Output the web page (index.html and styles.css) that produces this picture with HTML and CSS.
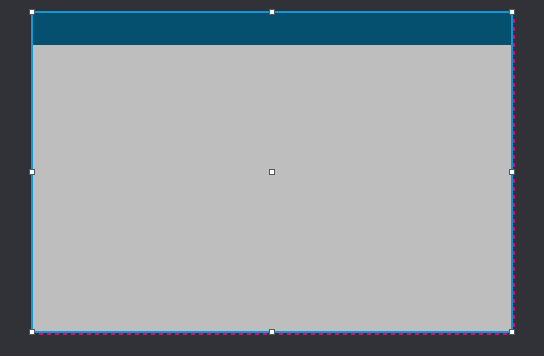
FILE: index.html
```html
<!DOCTYPE html>
<html lang="en">
<head>
  <meta charset="UTF-8" />
  <title>Canvas</title>
  <link rel="stylesheet" href="styles.css">
</head>
<body>
  <div class="canvas">
    <div class="frame">
      <div class="frame-header"></div>
      <div class="frame-body"></div>
      <div class="handles">
        <span class="handle tl"></span>
        <span class="handle tc"></span>
        <span class="handle tr"></span>
        <span class="handle ml"></span>
        <span class="handle mc"></span>
        <span class="handle mr"></span>
        <span class="handle bl"></span>
        <span class="handle bc"></span>
        <span class="handle br"></span>
      </div>
    </div>
  </div>
</body>
</html>
```

FILE: styles.css
```css
body {
  margin: 0;
  background: #303237;
  font-family: 'Liberation Sans', Arial, sans-serif;
}
.canvas {
  width: 544px;
  height: 356px;
  padding: 11px 0 0 31px;
  box-sizing: border-box;
}
.frame {
  position: relative;
  width: 482px;
  height: 322px;
  box-sizing: border-box;
  border: 2px solid #0f99d6;
  display: flex;
  flex-direction: column;
}
/* dashed shadow outline behind the selected frame */
.frame::before {
  content: "";
  position: absolute;
  left: 0;
  top: 0;
  width: 482px;
  height: 322px;
  z-index: -1;
  background:
    repeating-linear-gradient(to bottom, #e6007e 0 2px, transparent 2px 6px, #e6007e 6px 8px) right top / 2px 100% no-repeat,
    repeating-linear-gradient(to right, #e6007e 0 2px, transparent 2px 6px, #e6007e 6px 8px) left bottom / 100% 2px no-repeat;
}
.frame-header {
  height: 32px;
  background: #054f6f;
}
.frame-body {
  flex: 1;
  background: #bebebe;
}
.handles {
  position: absolute;
  top: -1px;
  left: -1px;
  right: -1px;
  bottom: -1px;
}
.handle {
  position: absolute;
  width: 6px;
  height: 6px;
  box-sizing: border-box;
  background: #fff;
  border: 1px solid #55585e;
  transform: translate(-50%, -50%);
}
.tl, .ml, .bl { left: 0; }
.tc, .mc, .bc { left: 50%; }
.tr, .mr, .br { left: 100%; }
.tl, .tc, .tr { top: 0; }
.ml, .mc, .mr { top: 50%; }
.bl, .bc, .br { top: 100%; }
```
